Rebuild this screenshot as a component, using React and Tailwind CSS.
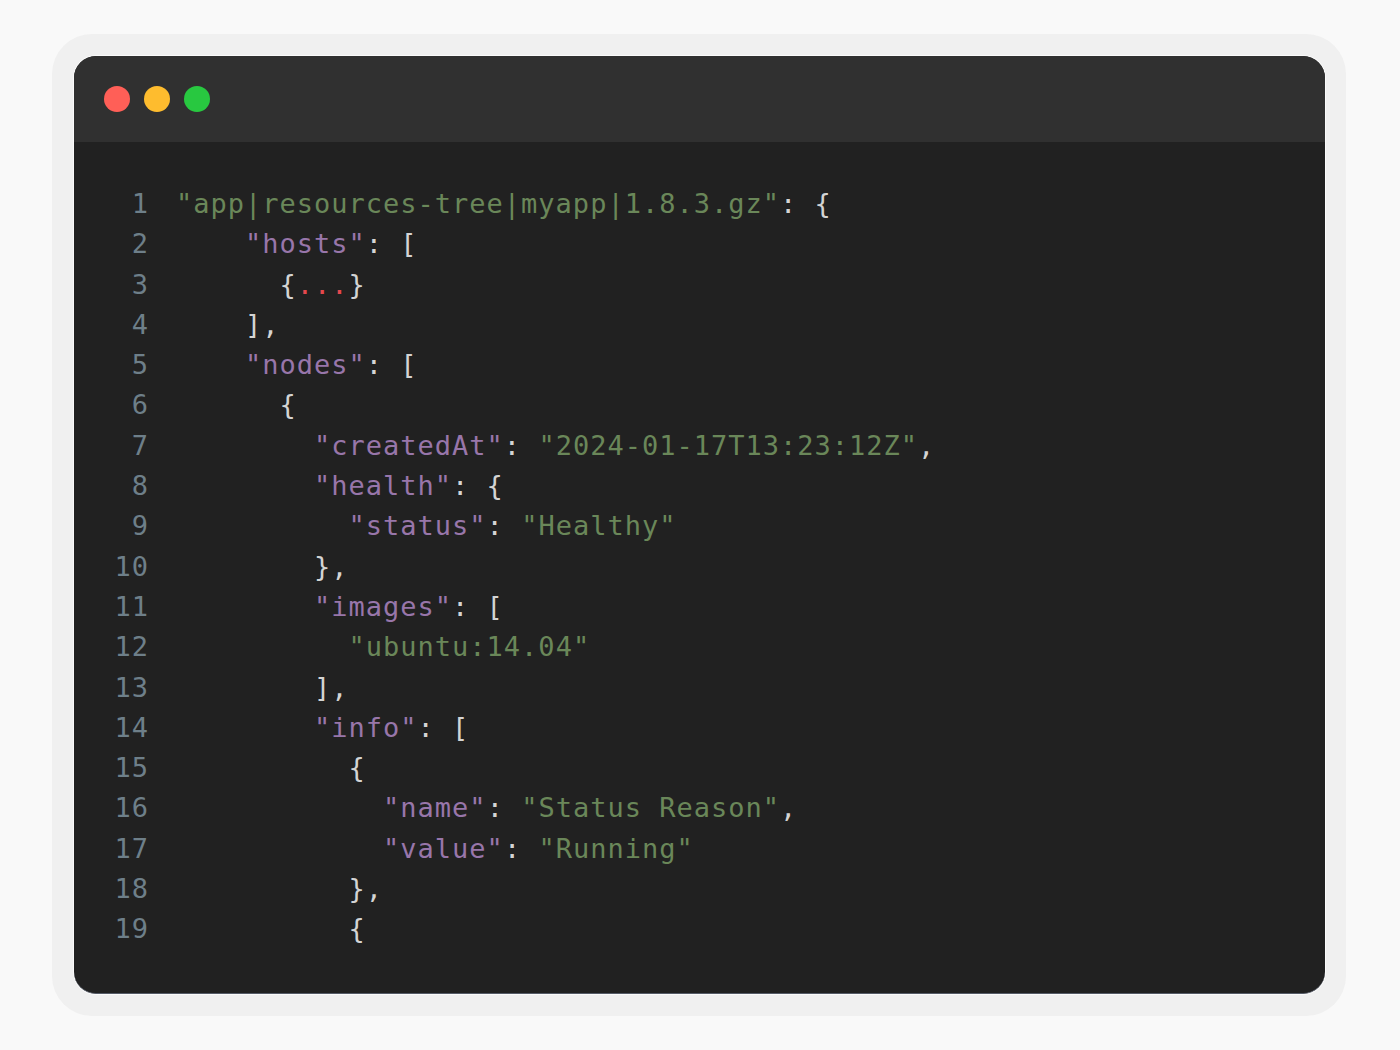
import React from "react";

const K = ({ children }) => <span className="text-[#9876aa]">{children}</span>;
const S = ({ children }) => <span className="text-[#6a8759]">{children}</span>;
const R = ({ children }) => <span className="text-[#e5484d]">{children}</span>;

const lines = [
  <><S>"app|resources-tree|myapp|1.8.3.gz"</S>: {"{"}</>,
  <>{"    "}<K>"hosts"</K>: [</>,
  <>{"      {"}<R>...</R>{"}"}</>,
  <>{"    ],"}</>,
  <>{"    "}<K>"nodes"</K>: [</>,
  <>{"      {"}</>,
  <>{"        "}<K>"createdAt"</K>: <S>"2024-01-17T13:23:12Z"</S>,</>,
  <>{"        "}<K>"health"</K>: {"{"}</>,
  <>{"          "}<K>"status"</K>: <S>"Healthy"</S></>,
  <>{"        },"}</>,
  <>{"        "}<K>"images"</K>: [</>,
  <>{"          "}<S>"ubuntu:14.04"</S></>,
  <>{"        ],"}</>,
  <>{"        "}<K>"info"</K>: [</>,
  <>{"          {"}</>,
  <>{"            "}<K>"name"</K>: <S>"Status Reason"</S>,</>,
  <>{"            "}<K>"value"</K>: <S>"Running"</S></>,
  <>{"          },"}</>,
  <>{"          {"}</>,
];

export default function App() {
  return (
    <div className="min-h-[1050px] w-[1400px] bg-[#f9f9f9] pt-[34px] pl-[52px]">
      <div className="w-[1294px] h-[982px] rounded-[40px] bg-[#f0f0f0] p-[22px] pr-[21px]">
        <div className="h-[938px] rounded-[22px] overflow-hidden bg-[#212121] ring-1 ring-white/70 flex flex-col border-b border-[#565c68]">
          <div className="h-[86px] bg-[#303030] flex items-center gap-[14px] pl-[30px] shrink-0">
            <div className="w-[26px] h-[26px] rounded-full bg-[#ff5f57]" />
            <div className="w-[26px] h-[26px] rounded-full bg-[#febc2e]" />
            <div className="w-[26px] h-[26px] rounded-full bg-[#28c840]" />
          </div>
          <div
            className="pt-[42px] pl-[40px] text-[27px] tracking-[1px] leading-[40.3px] text-[#d4d4d4] whitespace-pre"
            style={{ fontFamily: '"DejaVu Sans Mono", "Liberation Mono", monospace' }}
          >
            {lines.map((l, i) => (
              <div key={i} className="flex">
                <span className="w-[35px] text-right text-[#6e7f89] shrink-0">{i + 1}</span>
                <span className="ml-[27px]">{l}</span>
              </div>
            ))}
          </div>
        </div>
      </div>
    </div>
  );
}
